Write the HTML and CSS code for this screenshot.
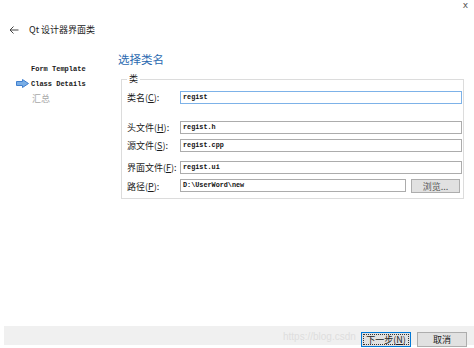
FILE: index.html
```html
<!DOCTYPE html>
<html lang="zh">
<head>
<meta charset="utf-8">
<link rel="stylesheet" href="styles.css">
</head>
<body>
<div class="window">
  <div class="titlebar"><span class="close">x</span></div>
  <div class="header">
    <svg class="back" width="10" height="8" viewBox="0 0 10 8"><path d="M9.5 4H1M4.5 0.5L1 4l3.5 3.5" fill="none" stroke="#444" stroke-width="1"/></svg>
    <span class="wiz-title">Qt 设计器界面类</span>
  </div>
  <div class="main">
    <ul class="nav">
      <li class="nav-item"><span class="nav-icon"></span>Form Template</li>
      <li class="nav-item current"><span class="nav-icon"><svg width="13" height="9" viewBox="0 0 13 9"><path d="M0.5 2.5H6.5V0.5L12.5 4.5L6.5 8.5V6.5H0.5Z" fill="#79aee6" stroke="#3f7fcf" stroke-width="1"/></svg></span>Class Details</li>
      <li class="nav-item muted"><span class="nav-icon"></span>汇总</li>
    </ul>
    <div class="content">
      <div class="page-title">选择类名</div>
      <fieldset class="group">
        <legend>类</legend>
        <div class="row first">
          <span class="label">类名(<u>C</u>):</span>
          <span class="input focus">regist</span>
        </div>
        <div class="row second">
          <span class="label">头文件(<u>H</u>):</span>
          <span class="input">regist.h</span>
        </div>
        <div class="row tight">
          <span class="label">源文件(<u>S</u>):</span>
          <span class="input">regist.cpp</span>
        </div>
        <div class="row fourth">
          <span class="label">界面文件(<u>F</u>):</span>
          <span class="input">regist.ui</span>
        </div>
        <div class="row tight">
          <span class="label">路径(<u>P</u>):</span>
          <span class="path">
            <span class="input">D:\UserWord\new</span>
            <span class="btn browse">浏览...</span>
          </span>
        </div>
      </fieldset>
    </div>
  </div>
  <div class="footer">
    <span class="watermark">https://blog.csdn</span>
    <span class="btn primary"><span class="focus-ring">下一步(<u>N</u>)</span></span>
    <span class="btn">取消</span>
  </div>
</div>
</body>
</html>
```

FILE: styles.css
```css
html, body {
  margin: 0;
  padding: 0;
  background: #ffffff;
}
body {
  width: 474px;
  height: 348px;
  overflow: hidden;
  font-family: "Noto Sans CJK SC", "Noto Sans", sans-serif;
  font-size: 9px;
  color: #1a1a1a;
}
.window {
  display: flex;
  flex-direction: column;
  height: 348px;
}
.titlebar {
  height: 23px;
  display: flex;
  justify-content: flex-end;
  align-items: flex-start;
}
.close {
  font-family: "DejaVu Sans", sans-serif;
  font-size: 9px;
  line-height: 9px;
  color: #555;
  margin-right: 6px;
  margin-top: 1px;
}
.header {
  height: 14px;
  display: flex;
  align-items: center;
  padding-left: 9px;
}
.back {
  margin-right: 10px;
}
.wiz-title {
  font-size: 9px;
  line-height: 14px;
  color: #222;
}
.main {
  display: flex;
}
.nav {
  list-style: none;
  margin: 0;
  padding: 24px 0 0 16px;
  width: 102px;
}
.nav-item {
  display: flex;
  align-items: center;
  height: 15px;
  font-family: "Liberation Mono", monospace;
  font-weight: bold;
  font-size: 7px;
  color: #1a1a1a;
}
.nav-item.muted {
  font-family: "Noto Sans CJK SC", sans-serif;
  font-weight: normal;
  font-size: 9px;
  color: #a8a8a8;
  padding-left: 1px;
}
.nav-icon {
  width: 15px;
  display: flex;
  align-items: center;
}
.content {
  flex: 1;
  padding-right: 10px;
}
.page-title {
  margin-top: 14px;
  height: 16px;
  line-height: 16px;
  font-size: 11.5px;
  color: #2a69b0;
}
.group {
  margin: 6px 0 0 3px;
  border: 1px solid #dcdcdc;
  padding: 0 1px 6px 5px;
}
.group legend {
  padding: 0 2px;
  margin-left: 0;
  font-size: 9px;
  line-height: 12px;
  color: #1a1a1a;
}
.row {
  display: grid;
  grid-template-columns: 53px 1fr;
  align-items: center;
  height: 13px;
  margin-top: 5px;
}
.row.first { margin-top: 6px; }
.row.second { margin-top: 17px; }
.row.fourth { margin-top: 9px; }
.label {
  font-size: 9px;
  line-height: 13px;
  white-space: nowrap;
}
.input {
  display: block;
  box-sizing: border-box;
  height: 13px;
  border: 1px solid #acacac;
  background: #fff;
  padding-left: 2px;
  font-family: "Liberation Mono", monospace;
  font-weight: bold;
  font-size: 6.8px;
  line-height: 11px;
  color: #111;
}
.input.focus {
  border-color: #7db2e8;
}
.path {
  display: flex;
  gap: 5px;
  padding-right: 2px;
}
.path .input {
  flex: 1;
}
.btn {
  box-sizing: border-box;
  display: flex;
  align-items: center;
  justify-content: center;
  background: #e1e1e1;
  border: 1px solid #adadad;
  font-size: 9px;
  color: #222;
}
.browse {
  width: 49px;
  height: 14px;
  color: #555;
}
.footer {
  position: relative;
  margin-top: auto;
  margin-left: 4px;
  height: 22px;
  box-sizing: border-box;
  padding: 6px 7px 0 0;
  display: flex;
  justify-content: flex-end;
  gap: 6px;
  background: linear-gradient(#f0f0f0 0 19px, #ffffff 19px);
}
.footer .btn {
  width: 50px;
  height: 15px;
  position: relative;
}
.btn.primary {
  border: 1px solid #0078d7;
  padding: 1px;
}
.focus-ring {
  display: flex;
  align-items: center;
  justify-content: center;
  width: 100%;
  height: 100%;
  box-sizing: border-box;
  border: 1px dotted #333;
}
.watermark {
  position: absolute;
  left: 279px;
  top: 5px;
  font-family: "Liberation Sans", sans-serif;
  font-size: 10px;
  color: #dedede;
  white-space: nowrap;
}
```
